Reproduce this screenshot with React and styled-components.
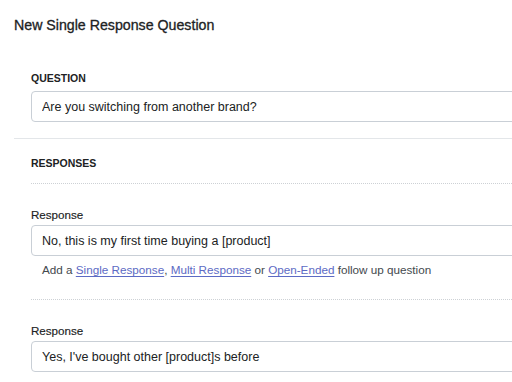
import React from 'react';
import styled, { createGlobalStyle } from 'styled-components';

const GlobalStyle = createGlobalStyle`
  html, body {
    margin: 0;
    padding: 0;
    background: #ffffff;
    overflow: hidden;
  }
  body {
    font-family: "Liberation Sans", Arial, sans-serif;
    color: #202223;
  }
`;

const Page = styled.div`
  width: 512px;
  height: 382px;
  overflow: hidden;
  padding-left: 14px;
  box-sizing: border-box;
`;

const Title = styled.h2`
  margin: 0;
  padding-top: 16px;
  line-height: 18px;
  font-size: 14.2px;
  font-weight: 400;
  -webkit-text-stroke: 0.3px #202223;
  color: #202223;
`;

const QuestionSection = styled.section`
  padding: 37px 0 16px 17px;
  border-bottom: 1px solid #e3e6e9;
`;

const Heading = styled.div`
  padding: 17px 0 13px 17px;
`;

const Caps = styled.div`
  font-size: 10.5px;
  font-weight: 700;
  text-transform: uppercase;
  color: #202223;
  line-height: 14px;
`;

const Field = styled.div`
  display: flex;
  flex-direction: column;
  gap: ${(p) => p.gap}px;
`;

const Label = styled.label`
  font-size: 11.6px;
  line-height: 14px;
  color: #202223;
  -webkit-text-stroke: 0.15px #202223;
`;

const Input = styled.input`
  box-sizing: border-box;
  width: 520px;
  height: 31px;
  padding: 0 10px;
  border: 1px solid #c9cfd6;
  border-radius: 4px;
  font-family: "Liberation Sans", Arial, sans-serif;
  font-size: 12.5px;
  color: #202223;
  background: #fff;
  outline: none;
`;

const Help = styled.p`
  margin: 7px 0 0 11px;
  font-size: 11.7px;
  line-height: 14px;
  color: #44494e;
`;

const Link = styled.a`
  color: #5c6ac4;
  text-decoration: underline;
  text-underline-offset: 2px;
`;

const Rule = styled.div`
  margin-left: 17px;
  border-top: 1px dotted #cdd1d5;
`;

const ResponseBlock = styled.div`
  padding: 24px 0 ${(p) => p.bottom || 0}px 17px;
`;

const ResponseField = ({ value }) => (
  <Field gap={3}>
    <Label>Response</Label>
    <Input readOnly value={value} />
  </Field>
);

export default function App() {
  return (
    <Page>
      <GlobalStyle />
      <Title>New Single Response Question</Title>
      <QuestionSection>
        <Field gap={6}>
          <Caps>Question</Caps>
          <Input readOnly value="Are you switching from another brand?" />
        </Field>
      </QuestionSection>
      <Heading>
        <Caps>Responses</Caps>
      </Heading>
      <Rule />
      <ResponseBlock bottom={22}>
        <ResponseField value="No, this is my first time buying a [product]" />
        <Help>
          Add a <Link href="#">Single Response</Link>, <Link href="#">Multi Response</Link> or{' '}
          <Link href="#">Open-Ended</Link> follow up question
        </Help>
      </ResponseBlock>
      <Rule />
      <ResponseBlock>
        <ResponseField value="Yes, I've bought other [product]s before" />
      </ResponseBlock>
    </Page>
  );
}
